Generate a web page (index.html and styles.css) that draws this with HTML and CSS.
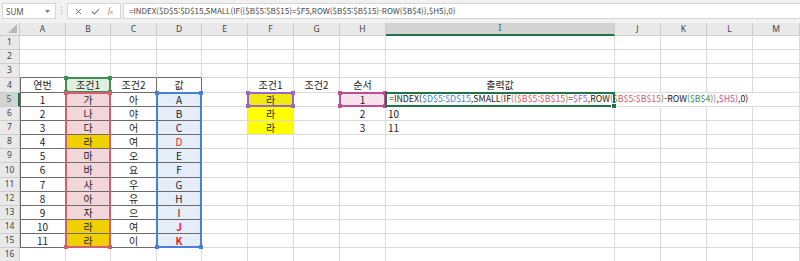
FILE: index.html
```html
<!DOCTYPE html>
<html lang="ko">

<head>
    <meta charset="UTF-8">
    <meta name="viewport" content="width=device-width, initial-scale=1.0">
    <title>INDEX SMALL</title>
    <link rel="stylesheet" href="styles.css">
</head>

<body>
    <div class="toolbar">
        <div class="namebox">
            <span>SUM</span>
            <svg width="5" height="3" viewBox="0 0 5 3"><path d="M0 0h5L2.5 3z" fill="#7a7a7a"/></svg>
        </div>
        <div class="grip">
            <svg width="2" height="10" viewBox="0 0 2 10"><rect x="0" y="1" width="1" height="1" fill="#aaa"/><rect x="0" y="4" width="1" height="1" fill="#aaa"/><rect x="0" y="7" width="1" height="1" fill="#aaa"/></svg>
        </div>
        <div class="btns">
            <svg width="7" height="7" viewBox="0 0 7 7"><path d="M1 1l5 5M6 1l-5 5" stroke="#777" stroke-width="1" fill="none"/></svg>
            <svg width="9" height="7" viewBox="0 0 9 7"><path d="M1 3.5l2.5 2.5L8 1" stroke="#777" stroke-width="1.1" fill="none"/></svg>
            <span class="fx">f<sub>x</sub></span>
        </div>
        <div class="formula">=INDEX($D$5:$D$15,SMALL(IF(($B$5:$B$15)=$F5,ROW($B$5:$B$15)-ROW($B$4)),$H5),0)</div>
    </div>

    <div class="sheet">
        <div class="corner"><svg width="9" height="9" viewBox="0 0 9 9"><path d="M9 0V9H0z" fill="#b9b9b9"/></svg></div>
        <div class="h">A</div><div class="h">B</div><div class="h">C</div><div class="h">D</div><div class="h">E</div><div class="h">F</div><div class="h">G</div><div class="h">H</div><div class="h cur">I</div><div class="h">J</div><div class="h">K</div><div class="h">L</div><div class="h">M</div>

        <div class="r">1</div><div></div><div></div><div></div><div></div><div></div><div></div><div></div><div></div><div></div><div></div><div></div><div></div><div></div>
        <div class="r">2</div><div></div><div></div><div></div><div></div><div></div><div></div><div></div><div></div><div></div><div></div><div></div><div></div><div></div>
        <div class="r">3</div><div class="tb"></div><div class="tb"></div><div class="tb"></div><div class="tb"></div><div></div><div></div><div></div><div></div><div></div><div></div><div></div><div></div><div></div>
        <div class="r">4</div><div class="t tl">연번</div><div class="t gr">조건1</div><div class="t">조건2</div><div class="t">값</div><div></div><div>조건1</div><div>조건2</div><div>순서</div><div>출력값</div><div></div><div></div><div></div><div></div>
        <div class="r cur">5</div><div class="t tl">1</div><div class="t pk">가</div><div class="t">아</div><div class="t bl">A</div><div></div><div class="yp">라</div><div></div><div class="mg">1</div>
        <div class="lt fml">=INDEX(<span class="c-bl">$D$5:$D$15</span>,SMALL<span class="p2">(</span>IF<span class="p3">(</span><span class="p4">(</span><span class="c-rd">$B$5:$B$15</span><span class="p4">)</span>=<span class="c-pu">$F5</span>,ROW<span class="p4">(</span><span class="c-rd">$B$5:$B$15</span><span class="p4">)</span>-ROW<span class="p4">(</span><span class="c-gr">$B$4</span><span class="p4">)</span><span class="p3">)</span>,<span class="c-mg">$H5</span><span class="p2">)</span>,0)</div>
        <div class="ov"></div><div class="ov"></div><div class="ov"></div><div></div>
        <div class="r">6</div><div class="t tl">2</div><div class="t pk">나</div><div class="t">야</div><div class="t bl">B</div><div></div><div class="yl">라</div><div></div><div>2</div><div class="lt">10</div><div></div><div></div><div></div><div></div>
        <div class="r">7</div><div class="t tl">3</div><div class="t pk">다</div><div class="t">어</div><div class="t bl">C</div><div></div><div class="yl">라</div><div></div><div>3</div><div class="lt">11</div><div></div><div></div><div></div><div></div>
        <div class="r">8</div><div class="t tl">4</div><div class="t gd">라</div><div class="t">여</div><div class="t bl red">D</div><div></div><div></div><div></div><div></div><div></div><div></div><div></div><div></div><div></div>
        <div class="r">9</div><div class="t tl">5</div><div class="t pk">마</div><div class="t">오</div><div class="t bl">E</div><div></div><div></div><div></div><div></div><div></div><div></div><div></div><div></div><div></div>
        <div class="r">10</div><div class="t tl">6</div><div class="t pk">바</div><div class="t">요</div><div class="t bl">F</div><div></div><div></div><div></div><div></div><div></div><div></div><div></div><div></div><div></div>
        <div class="r">11</div><div class="t tl">7</div><div class="t pk">사</div><div class="t">우</div><div class="t bl">G</div><div></div><div></div><div></div><div></div><div></div><div></div><div></div><div></div><div></div>
        <div class="r">12</div><div class="t tl">8</div><div class="t pk">아</div><div class="t">유</div><div class="t bl">H</div><div></div><div></div><div></div><div></div><div></div><div></div><div></div><div></div><div></div>
        <div class="r">13</div><div class="t tl">9</div><div class="t pk">자</div><div class="t">으</div><div class="t bl">I</div><div></div><div></div><div></div><div></div><div></div><div></div><div></div><div></div><div></div>
        <div class="r">14</div><div class="t tl">10</div><div class="t gd">라</div><div class="t">여</div><div class="t bl red b">J</div><div></div><div></div><div></div><div></div><div></div><div></div><div></div><div></div><div></div>
        <div class="r">15</div><div class="t tl">11</div><div class="t gd">라</div><div class="t">이</div><div class="t bl red b">K</div><div></div><div></div><div></div><div></div><div></div><div></div><div></div><div></div><div></div>
        <div class="r">16</div><div></div><div></div><div></div><div></div><div></div><div></div><div></div><div></div><div></div><div></div><div></div><div></div><div></div>

        <!-- reference highlights drawn over the cells -->
        <div class="marks">
            <div class="frame f-green" style="grid-area: 5 / 3"></div>
            <div class="frame f-red" style="grid-area: 6 / 3 / 17 / 4"></div>
            <div class="frame f-blue" style="grid-area: 6 / 5 / 17 / 6"></div>
            <div class="frame f-purple" style="grid-area: 6 / 7"></div>
            <div class="frame f-magenta" style="grid-area: 6 / 9"></div>
            <div class="active" style="grid-area: 6 / 10"></div>
        </div>
    </div>
</body>

</html>
```

FILE: styles.css
```css
:root {
    --grid: #dadada;
    --head-bg: #e9e9e9;
    --head-line: #cdcdcd;
    --head-text: #444;
    --table-line: #6b6b6b;
    --excel-green: #217346;
    --ref-blue: #4a7fd6;
    --ref-red: #d0606c;
    --ref-purple: #9b63cf;
    --ref-green: #3d8f55;
    --ref-magenta: #c24d92;
    --cols: 20px 46px 45px 46px 45px 46px 46px 46px 46px 229px 46px 46px 46px 47px;
    --rows: 13px 14px 14px 14px 15px 14px 14px 14px 14px 14px 15px 14px 14px 14px 14px 14px 14px;
}

body {
    margin: 0;
    width: 800px;
    height: 261px;
    overflow: hidden;
    background: #fff;
    color: #222;
    font-family: "Noto Sans CJK KR", "Noto Sans", sans-serif;
}

/* formula bar */

.toolbar {
    height: 23px;
    box-sizing: border-box;
    background: #f1f1f1;
    display: flex;
    align-items: flex-start;
    padding: 3px 0 0 2px;
}

.namebox {
    width: 54px;
    height: 16px;
    box-sizing: border-box;
    background: #fff;
    border: 1px solid #d6d6d6;
    display: flex;
    align-items: center;
    justify-content: space-between;
    padding: 0 5px 0 3px;
    font-family: "Noto Sans", sans-serif;
    font-size: 8px;
    color: #555;
}

.grip {
    width: 11px;
    height: 16px;
    display: flex;
    align-items: center;
    justify-content: center;
}

.btns {
    width: 54px;
    height: 16px;
    box-sizing: border-box;
    background: #fff;
    border: 1px solid #d6d6d6;
    display: flex;
    align-items: center;
    justify-content: space-around;
    padding: 0 3px;
}

.fx {
    font-family: "Liberation Serif", serif;
    font-style: italic;
    font-size: 8px;
    color: #777;
    line-height: 1;
}

.fx sub {
    font-size: 6px;
    vertical-align: -1px;
}

.formula {
    flex: 1;
    height: 16px;
    box-sizing: border-box;
    margin-left: 2px;
    background: #fff;
    border: 1px solid #d6d6d6;
    border-right: none;
    padding-left: 5px;
    font-family: "Noto Sans CJK KR", "Noto Sans", sans-serif;
    font-size: 8px;
    line-height: 14px;
    color: #444;
    white-space: nowrap;
}

/* sheet grid */

.sheet {
    position: relative;
    display: grid;
    grid-template-columns: var(--cols);
    grid-template-rows: var(--rows);
}

.sheet > div {
    box-sizing: border-box;
    border-right: 1px solid var(--grid);
    border-bottom: 1px solid var(--grid);
    display: flex;
    align-items: center;
    justify-content: center;
    font-size: 10px;
    line-height: 1;
    white-space: nowrap;
    color: #222;
}

.sheet > .corner {
    background: var(--head-bg);
    border-color: var(--head-line);
    align-items: flex-end;
    justify-content: flex-end;
    padding: 0 2px 2px 0;
}

.sheet > .h,
.sheet > .r {
    background: var(--head-bg);
    border-color: var(--head-line);
    color: var(--head-text);
    font-family: "Noto Sans", sans-serif;
    font-size: 8.5px;
}

.sheet > .h.cur {
    background: #d3d3d3;
    color: var(--excel-green);
    border-bottom: 2px solid var(--excel-green);
}

.sheet > .r.cur {
    background: #d3d3d3;
    color: var(--excel-green);
    border-right: 2px solid var(--excel-green);
}

/* bordered table A4:D15 */

.sheet > .t {
    border-right-color: var(--table-line);
    border-bottom-color: var(--table-line);
}

.sheet > .tl {
    box-shadow: inset 1px 0 var(--table-line);
}

.sheet > .tb {
    border-bottom-color: var(--table-line);
}

/* fills */

.sheet > .pk { background: #f3d6d9; }
.sheet > .gd { background: #f1d000; }
.sheet > .bl { background: #e5edf9; }
.sheet > .gr { background: #e1eedd; }
.sheet > .yl { background: #ffff00; }
.sheet > .yp { background: #eeea12; }
.sheet > .mg { background: #f5e2ec; }

.sheet > .red { color: #ee1c25; }
.sheet > .b { font-weight: bold; }

.sheet > .lt {
    justify-content: flex-start;
    padding-left: 2px;
}

.sheet > .ov {
    border-right-color: transparent;
}

.sheet > .fml {
    overflow: visible;
    position: relative;
    z-index: 1;
    font-size: 8.8px;
    padding-left: 3px;
}

.c-bl { color: var(--ref-blue); }
.c-rd { color: var(--ref-red); }
.c-pu { color: var(--ref-purple); }
.c-gr { color: var(--ref-green); }
.c-mg { color: var(--ref-magenta); }
.p2 { color: var(--ref-magenta); }
.p3 { color: var(--ref-red); }
.p4 { color: var(--ref-green); }

/* highlight layer, same tracks as the sheet */

.sheet > .marks {
    position: absolute;
    top: 0;
    left: 0;
    width: 100%;
    height: 100%;
    display: grid;
    grid-template-columns: var(--cols);
    grid-template-rows: var(--rows);
    align-items: stretch;
    justify-content: start;
    border: none;
    pointer-events: none;
    z-index: 2;
}

.frame {
    position: relative;
    box-sizing: border-box;
    margin: -1px 0 0 -1px;
    border: 2px solid var(--c);
}

.frame::after {
    content: "";
    position: absolute;
    inset: -3px;
    background:
        linear-gradient(var(--c), var(--c)) left top / 4px 4px no-repeat,
        linear-gradient(var(--c), var(--c)) right top / 4px 4px no-repeat,
        linear-gradient(var(--c), var(--c)) left bottom / 4px 4px no-repeat,
        linear-gradient(var(--c), var(--c)) right bottom / 4px 4px no-repeat;
}

.f-green { --c: var(--ref-green); }
.f-red { --c: var(--ref-red); }
.f-blue { --c: var(--ref-blue); }
.f-purple { --c: var(--ref-purple); }
.f-magenta { --c: var(--ref-magenta); }

.active {
    position: relative;
    box-sizing: border-box;
    margin: -1px 0 0 -1px;
    border: 2px solid var(--excel-green);
}

.active::after {
    content: "";
    position: absolute;
    right: -4px;
    bottom: -4px;
    width: 4px;
    height: 4px;
    background: var(--excel-green);
    border: 1px solid #fff;
}
```
